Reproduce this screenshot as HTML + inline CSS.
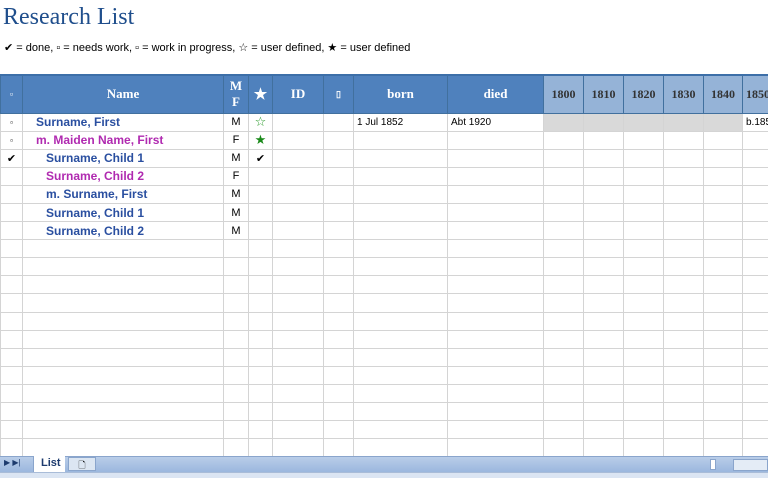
<!DOCTYPE html>
<html><head><meta charset="utf-8"><style>
*{margin:0;padding:0;box-sizing:border-box}
body{width:768px;height:478px;overflow:hidden;background:#fff;font-family:"Liberation Sans","DejaVu Sans",sans-serif;position:relative}
.t{position:absolute;left:3px;top:4px;font-family:"Liberation Serif",serif;font-size:24px;color:#1f4e8c}
.leg{position:absolute;left:4px;top:41px;font-size:11px;color:#000}
table{position:absolute;left:0;top:74px;border-collapse:collapse;table-layout:fixed;width:790px}
td{border:1px solid #d4d4d4;height:18.1px;font-size:11px;white-space:nowrap;overflow:hidden;padding:0 3px}
th{height:38px;background:#4f81bd;color:#fff;font-family:"Liberation Serif",serif;font-size:13px;font-weight:bold;border:1px solid #41709e;border-top:2px solid #3d6fa8;white-space:nowrap;overflow:hidden}
th.y{background:#95b3d7;color:#333;font-size:12px;padding:0}
.n{font-weight:bold;color:#2a4fa0;font-size:12px}
.p{color:#b02ab0}
.i1{padding-left:13px}.i2{padding-left:23px}
.c{text-align:center}
.g{background:#d9d9d9}
.bar{position:absolute;left:0;top:456px;width:768px;height:16px;background:linear-gradient(#b9cde8,#9bb7de);border-top:1px solid #8aa5cc}
.bot{position:absolute;left:0;top:472px;width:768px;height:6px;background:#dbe5f3;border-top:1px solid #a9bcd8}
.tab{position:absolute;left:33px;top:456px;width:32px;height:16px;background:#fff;font-size:11px;font-weight:bold;color:#1d3b6e;padding:1px 0 0 7px;border-left:1px solid #8aa5cc}
</style></head><body>
<div class="t">Research List</div>
<div class="leg">✔ = done, ▫ = needs work, ▫ = work in progress, ☆ = user defined, ★ = user defined</div>
<table>
<colgroup><col style="width:22px"><col style="width:201px"><col style="width:25px"><col style="width:24px"><col style="width:51px"><col style="width:30px"><col style="width:94px"><col style="width:96px"><col style="width:40px"><col style="width:40px"><col style="width:40px"><col style="width:40px"><col style="width:39px"><col style="width:48px"></colgroup>
<tr><th style="font-size:9px">▫</th><th>Name</th><th style="line-height:16px">M<br>F</th><th style="font-size:15px">★</th><th>ID</th><th style="font-size:9px">▯</th><th>born</th><th>died</th><th class="y">1800</th><th class="y">1810</th><th class="y">1820</th><th class="y">1830</th><th class="y">1840</th><th class="y" style="text-align:left;padding-left:3px">1850</th></tr>
<tr><td class="c" style="font-size:8px">▫</td><td class="n i1">Surname, First</td><td class="c">M</td><td class="c" style="color:#2a9a2a;font-size:13px">☆</td><td></td><td></td><td style="font-size:10px">1 Jul 1852</td><td style="font-size:10px">Abt 1920</td><td class="g"></td><td class="g"></td><td class="g"></td><td class="g"></td><td class="g"></td><td style="font-size:10px">b.1852</td></tr>
<tr><td class="c" style="font-size:8px">▫</td><td class="n p i1">m. Maiden Name, First</td><td class="c">F</td><td class="c" style="color:#1a8a1a;font-size:13px">★</td><td></td><td></td><td></td><td></td><td></td><td></td><td></td><td></td><td></td><td></td></tr>
<tr><td class="c">✔</td><td class="n i2">Surname, Child 1</td><td class="c">M</td><td class="c">✔</td><td></td><td></td><td></td><td></td><td></td><td></td><td></td><td></td><td></td><td></td></tr>
<tr><td></td><td class="n p i2">Surname, Child 2</td><td class="c">F</td><td></td><td></td><td></td><td></td><td></td><td></td><td></td><td></td><td></td><td></td><td></td></tr>
<tr><td></td><td class="n i2">m. Surname, First</td><td class="c">M</td><td></td><td></td><td></td><td></td><td></td><td></td><td></td><td></td><td></td><td></td><td></td></tr>
<tr><td></td><td class="n i2">Surname, Child 1</td><td class="c">M</td><td></td><td></td><td></td><td></td><td></td><td></td><td></td><td></td><td></td><td></td><td></td></tr>
<tr><td></td><td class="n i2">Surname, Child 2</td><td class="c">M</td><td></td><td></td><td></td><td></td><td></td><td></td><td></td><td></td><td></td><td></td><td></td></tr>
<tr><td></td><td></td><td></td><td></td><td></td><td></td><td></td><td></td><td></td><td></td><td></td><td></td><td></td><td></td></tr>
<tr><td></td><td></td><td></td><td></td><td></td><td></td><td></td><td></td><td></td><td></td><td></td><td></td><td></td><td></td></tr>
<tr><td></td><td></td><td></td><td></td><td></td><td></td><td></td><td></td><td></td><td></td><td></td><td></td><td></td><td></td></tr>
<tr><td></td><td></td><td></td><td></td><td></td><td></td><td></td><td></td><td></td><td></td><td></td><td></td><td></td><td></td></tr>
<tr><td></td><td></td><td></td><td></td><td></td><td></td><td></td><td></td><td></td><td></td><td></td><td></td><td></td><td></td></tr>
<tr><td></td><td></td><td></td><td></td><td></td><td></td><td></td><td></td><td></td><td></td><td></td><td></td><td></td><td></td></tr>
<tr><td></td><td></td><td></td><td></td><td></td><td></td><td></td><td></td><td></td><td></td><td></td><td></td><td></td><td></td></tr>
<tr><td></td><td></td><td></td><td></td><td></td><td></td><td></td><td></td><td></td><td></td><td></td><td></td><td></td><td></td></tr>
<tr><td></td><td></td><td></td><td></td><td></td><td></td><td></td><td></td><td></td><td></td><td></td><td></td><td></td><td></td></tr>
<tr><td></td><td></td><td></td><td></td><td></td><td></td><td></td><td></td><td></td><td></td><td></td><td></td><td></td><td></td></tr>
<tr><td></td><td></td><td></td><td></td><td></td><td></td><td></td><td></td><td></td><td></td><td></td><td></td><td></td><td></td></tr>
<tr><td></td><td></td><td></td><td></td><td></td><td></td><td></td><td></td><td></td><td></td><td></td><td></td><td></td><td></td></tr>
</table>
<div class="bar"><span style="position:absolute;left:4px;top:1px;font-size:8px;color:#1d3b6e">▶ ▶|</span><span style="position:absolute;left:710px;top:2px;width:6px;height:11px;background:#fff;border:1px solid #8aa5cc"></span><span style="position:absolute;left:733px;top:2px;width:35px;height:12px;background:#e4ecf6;border:1px solid #8aa5cc"></span></div>
<div class="tab">List</div>
<div style="position:absolute;left:68px;top:457px;width:28px;height:14px;background:#dce6f2;border:1px solid #8aa5cc;font-size:9px;text-align:center">🗋</div>
<div class="bot"></div>
</body></html>
